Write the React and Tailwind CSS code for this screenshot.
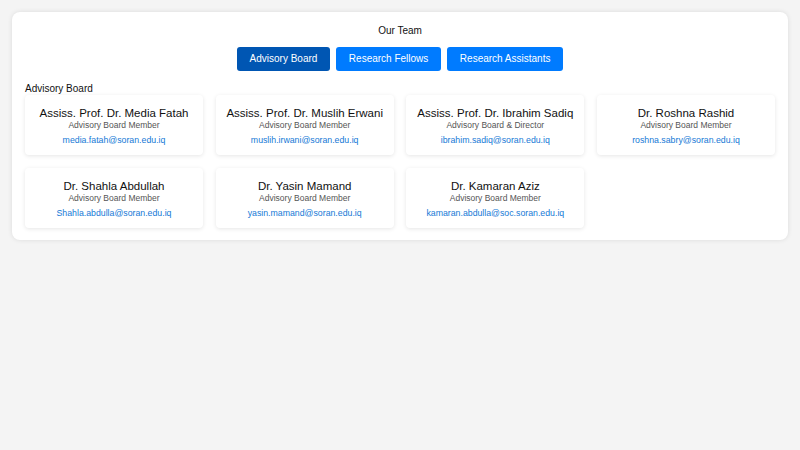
import React, { useState } from 'react';

const members = [
  { name: 'Assiss. Prof. Dr. Media Fatah', role: 'Advisory Board Member', email: 'media.fatah@soran.edu.iq' },
  { name: 'Assiss. Prof. Dr. Muslih Erwani', role: 'Advisory Board Member', email: 'muslih.irwani@soran.edu.iq' },
  { name: 'Assiss. Prof. Dr. Ibrahim Sadiq', role: 'Advisory Board & Director', email: 'ibrahim.sadiq@soran.edu.iq' },
  { name: 'Dr. Roshna Rashid', role: 'Advisory Board Member', email: 'roshna.sabry@soran.edu.iq' },
  { name: 'Dr. Shahla Abdullah', role: 'Advisory Board Member', email: 'Shahla.abdulla@soran.edu.iq' },
  { name: 'Dr. Yasin Mamand', role: 'Advisory Board Member', email: 'yasin.mamand@soran.edu.iq' },
  { name: 'Dr. Kamaran Aziz', role: 'Advisory Board Member', email: 'kamaran.abdulla@soc.soran.edu.iq' },
];

const tabs = ['Advisory Board', 'Research Fellows', 'Research Assistants'];

export default function App() {
  const [active, setActive] = useState('Advisory Board');

  return (
    <div className="min-h-[450px] bg-[#f4f4f4] p-[12px] font-['Liberation_Sans',Arial,sans-serif] text-[#111]">
      <div className="bg-white rounded-[8px] shadow-[0_0_5px_rgba(0,0,0,0.1)] px-[13px] pt-[13px] pb-[12px]">
        <h1 className="text-center text-[10px] leading-[12px]">Our Team</h1>

        {/* Tabs */}
        <div className="flex justify-center gap-[6.5px] mt-[10px]">
          {tabs.map((t) => (
            <button
              key={t}
              onClick={() => setActive(t)}
              className={`h-[24px] px-[12.5px] rounded-[3px] text-white text-[10px] leading-[12px] ${
                active === t ? 'bg-[#0056b3]' : 'bg-[#007bff]'
              }`}
            >
              {t}
            </button>
          ))}
        </div>

        <h2 className="text-[10px] leading-[12px] mt-[12px]">{active}</h2>

        {/* Members */}
        <div className="grid grid-cols-4 gap-x-[12.67px] gap-y-[13px]">
          {members.map((m) => (
            <div
              key={m.email}
              className="bg-white rounded-[4px] shadow-[0_1px_4px_rgba(0,0,0,0.1)] text-center pt-[11px] pb-[10px] h-[60px]"
            >
              <div className="text-[11.5px] leading-[14px] text-[#111]">{m.name}</div>
              <div className="text-[8.5px] leading-[10px] text-[#555]">{m.role}</div>
              <div className="text-[8.75px] leading-[10px] text-[#1579d6] mt-[5px]">{m.email}</div>
            </div>
          ))}
        </div>
      </div>
    </div>
  );
}
